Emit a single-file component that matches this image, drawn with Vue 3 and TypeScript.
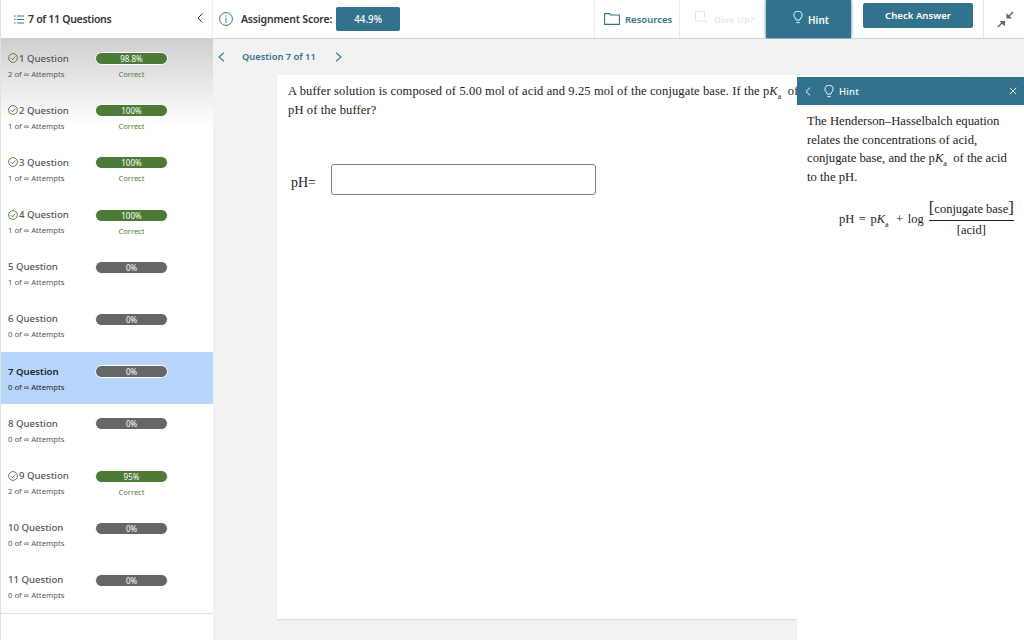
<script setup lang="ts">
interface Row { n: number; pct: string; attempts: number; done: boolean; active?: boolean }
const rows: Row[] = [
  { n: 1, pct: '98.8%', attempts: 2, done: true },
  { n: 2, pct: '100%', attempts: 1, done: true },
  { n: 3, pct: '100%', attempts: 1, done: true },
  { n: 4, pct: '100%', attempts: 1, done: true },
  { n: 5, pct: '0%', attempts: 1, done: false },
  { n: 6, pct: '0%', attempts: 0, done: false },
  { n: 7, pct: '0%', attempts: 0, done: false, active: true },
  { n: 8, pct: '0%', attempts: 0, done: false },
  { n: 9, pct: '95%', attempts: 2, done: true },
  { n: 10, pct: '0%', attempts: 0, done: false },
  { n: 11, pct: '0%', attempts: 0, done: false },
]
</script>

<template>
  <div class="app">
    <header class="top">
      <div class="top-left">
        <svg class="list-ic" width="10" height="9" viewBox="0 0 10 9" fill="none" stroke="#33728c" stroke-width="1">
          <path d="M0 1h1.500M3 1h7M0 4.500h1.500M3 4.500h7M0 8h1.500M3 8h7" />
        </svg>
        <span class="count">7 of 11 Questions</span>
        <svg class="collapse" width="6" height="10" viewBox="0 0 6 10" fill="none" stroke="#333" stroke-width="1">
          <path d="M5.300.6 1 5l4.300 4.400" />
        </svg>
      </div>
      <div class="score">
        <svg width="14" height="14" viewBox="0 0 14 14" fill="none" stroke="#33728c" stroke-width="1">
          <circle cx="7" cy="7" r="6.400" />
          <path d="M7 6v4.800M7 3.300v1.300" />
        </svg>
        <span class="score-label">Assignment Score:</span>
        <span class="score-box">44.9%</span>
      </div>
      <div class="tool resources">
        <svg width="16" height="12" viewBox="0 0 16 12" fill="none" stroke="#33728c" stroke-width="1.100">
          <path d="M.6 11.400V.6h5l1.200 1.400h8.600v9.400z" />
        </svg>
        <span>Resources</span>
      </div>
      <div class="tool giveup">
        <svg width="13" height="13" viewBox="0 0 13 13" fill="none" stroke="#e6e6e6" stroke-width="1">
          <path d="M8 10H.5V.5h9V7M9 9l3 3M12 9l-3 3" />
        </svg>
        <span>Give Up?</span>
      </div>
      <div class="hint-tab">
        <svg width="10" height="13" viewBox="0 0 11 15" fill="none" stroke="#fff" stroke-width="1.100">
          <path d="M3.500 10.500C3.300 8.600.8 7.600.8 5A4.700 4.700 0 0 1 10.200 5c0 2.600-2.500 3.600-2.700 5.500zM3.600 13.400h3.800" />
        </svg>
        <span>Hint</span>
      </div>
      <div class="check-wrap"><span class="check">Check Answer</span></div>
      <div class="compress">
        <svg width="17" height="17" viewBox="0 0 18 18" fill="#666" stroke="#666">
          <path d="M17 1l-5 5" stroke-width="1.500" />
          <path d="M10 2v6h6z" stroke="none" />
          <path d="M1 17l5-5" stroke-width="1.500" />
          <path d="M2.500 10.500H8.500V16.500z" stroke="none" />
        </svg>
      </div>
    </header>

    <div class="body">
      <aside class="side">
        <div class="list">
          <div v-for="r in rows" :key="r.n" class="row" :class="{ active: r.active }">
            <div class="row-left">
              <div class="title">
                <svg v-if="r.done" width="10" height="10" viewBox="0 0 10 10" fill="none" stroke="#4a7c37" stroke-width="0.900">
                  <circle cx="5" cy="5" r="4.400" />
                  <path d="M2.800 5.200 4.400 6.800 7.300 3.500" />
                </svg>
                <span>{{ r.n }} Question</span>
              </div>
              <div class="attempts">{{ r.attempts }} of ∞ Attempts</div>
            </div>
            <div class="row-right">
              <div class="pill" :class="{ ok: r.done }">{{ r.pct }}</div>
              <div v-if="r.done" class="correct">Correct</div>
            </div>
          </div>
        </div>
      </aside>

      <main class="main">
        <nav class="qnav">
          <svg width="7" height="10" viewBox="0 0 7 10" fill="none" stroke="#33728c" stroke-width="1.100"><path d="M6 .6 1 5l5 4.400" /></svg>
          <span class="qlabel">Question 7 of 11</span>
          <svg width="7" height="10" viewBox="0 0 7 10" fill="none" stroke="#33728c" stroke-width="1.100"><path d="M1 .6 6 5 1 9.400" /></svg>
        </nav>
        <section class="card">
          <p class="qtext">A buffer solution is composed of 5.00 mol of acid and 9.25 mol of the conjugate base. If the p<i>K</i><sub>a</sub> of<br>pH of the buffer?</p>
          <div class="answer">
            <span class="ph">pH=</span>
            <input class="field" type="text" aria-label="pH" />
          </div>
        </section>
      </main>
    </div>

    <aside class="hint">
      <div class="hint-head">
        <svg width="6" height="9" viewBox="0 0 6 9" fill="none" stroke="#fff" stroke-width="1"><path d="M5 .6 1 4.500 5 8.400" /></svg>
        <svg class="bulb" width="10" height="13" viewBox="0 0 11 15" fill="none" stroke="#fff" stroke-width="1.100">
          <path d="M3.500 10.500C3.300 8.600.8 7.600.8 5A4.700 4.700 0 0 1 10.200 5c0 2.600-2.500 3.600-2.700 5.500zM3.600 13.400h3.800" />
        </svg>
        <span class="hint-title">Hint</span>
        <svg class="close" width="8" height="8" viewBox="0 0 8 8" fill="none" stroke="#fff" stroke-width="1"><path d="M.8.8l6.400 6.400M7.200.8.800 7.200" /></svg>
      </div>
      <div class="hint-body">
        <p class="hint-text">The Henderson–Hasselbalch equation relates the concentrations of acid, conjugate base, and the p<i>K</i><sub>a</sub> of the acid to the pH.</p>
        <div class="formula">
          <span class="lhs">pH = p<i>K</i><sub>a</sub> + log</span>
          <span class="frac">
            <span class="num"><span class="bk">[</span>conjugate base<span class="bk">]</span></span>
            <span class="den">[acid]</span>
          </span>
        </div>
      </div>
    </aside>
  </div>
</template>

<style>
html, body { margin: 0; padding: 0; background: #fff; }
</style>

<style scoped>
.app {
  position: relative;
  width: 1024px;
  height: 640px;
  overflow: hidden;
  box-sizing: border-box;
  border-left: 1px solid #e2e2e2;
  display: flex;
  flex-direction: column;
  background: #fff;
  font-family: "Noto Sans", sans-serif;
  color: #333;
}
.top {
  height: 39px;
  flex: none;
  box-sizing: border-box;
  border-bottom: 1px solid #d4d4d4;
  display: flex;
  align-items: stretch;
}
.top-left {
  width: 212px;
  box-sizing: border-box;
  padding-left: 13px;
  display: flex;
  align-items: center;
  border-right: 1px solid #f0f0f0;
}
.count { margin-left: 4px; font-size: 10.500px; font-weight: 600; letter-spacing: -0.300px; color: #333; }
.collapse { margin-left: 86px; margin-top: -2px; }
.score {
  width: 382px;
  box-sizing: border-box;
  padding-left: 6px;
  display: flex;
  align-items: center;
  border-right: 1px solid #ececec;
}
.score-label { margin-left: 8px; font-size: 10.500px; font-weight: 600; letter-spacing: -0.200px; }
.score-box {
  margin-left: 4px;
  width: 64px;
  height: 24px;
  border-radius: 2px;
  background: #33728c;
  color: #fff;
  font-size: 9.800px;
  font-weight: 500;
  display: flex;
  align-items: center;
  justify-content: center;
}
.tool { display: flex; align-items: center; font-size: 9.500px; font-weight: 600; box-sizing: border-box; }
.resources { width: 85px; padding-left: 9px; gap: 5px; color: #33728c; border-right: 1px solid #ececec; }
.giveup { width: 86px; padding-left: 15px; gap: 6px; color: #e8e8e8; }
.giveup svg { margin-top: -3px; }
.hint-tab {
  width: 85px;
  box-sizing: border-box;
  padding-left: 27px;
  background: #33728c;
  box-shadow: 0 0 3px #33728c;
  color: #fff;
  font-size: 10px;
  font-weight: 600;
  display: flex;
  align-items: center;
  gap: 5px;
}
.hint-tab svg { margin-top: -4px; }
.hint-tab span { margin-top: 2px; }
.check-wrap { width: 133px; box-sizing: border-box; padding: 3px 0 0 12px; border-right: 1px solid #e4e4e4; }
.check {
  width: 110px;
  height: 25px;
  border-radius: 2px;
  background: #33728c;
  color: #fff;
  font-size: 9.600px;
  font-weight: 600;
  display: flex;
  align-items: center;
  justify-content: center;
}
.compress { flex: 1; padding: 11px 0 0 13px; box-sizing: border-box; }

.body { flex: 1; display: flex; min-height: 0; }
.side { width: 212px; flex: none; }
.list {
  border-bottom: 1px solid #e0e0e0;
  background: linear-gradient(#cfcfcf 0, #fff 86px);
}
.row {
  height: 52.200px;
  box-sizing: border-box;
  padding: 13px 0 0 7px;
  display: flex;
}
.row.active { background: #b5d6fa; }
.row-left { width: 87px; }
.title {
  height: 12px;
  display: flex;
  align-items: center;
  gap: 1px;
  font-size: 9.600px;
  font-weight: 500;
  color: #555;
}
.active .title { color: #222; font-weight: 600; }
.attempts { margin-top: 3.500px; font-size: 7.700px; line-height: 12px; color: #555; }
.active .attempts { color: #222; }
.row-right { width: 73px; text-align: center; }
.pill {
  height: 13px;
  box-sizing: border-box;
  border: 1px solid #fff;
  border-radius: 7px;
  background: #666;
  color: #fff;
  font-size: 8px;
  line-height: 11px;
}
.pill.ok { background: #4a7c37; }
.correct { margin-top: 4px; font-size: 7.500px; line-height: 11px; color: #4a7c37; }

.main {
  flex: 1;
  min-width: 0;
  background: #f2f2f2;
  display: flex;
  flex-direction: column;
}
.qnav {
  height: 36px;
  flex: none;
  box-sizing: border-box;
  padding: 0 0 0 5px;
  display: flex;
  align-items: center;
  color: #33728c;
}
.qlabel { margin: -1px 19px 0 17px; font-size: 9.300px; font-weight: 600; }
.card {
  margin-left: 64px;
  width: 683px;
  height: 544px;
  box-sizing: border-box;
  padding: 7px 0 0 11px;
  background: #fff;
  box-shadow: 0 1px 1px #dcdcdc;
}
.qtext {
  margin: 0;
  font-family: "Liberation Serif", serif;
  font-size: 12.500px;
  line-height: 19px;
  letter-spacing: 0.130px;
  color: #222;
  white-space: nowrap;
}
sub { font-size: 0.65em; line-height: 0; margin-right: 3px; }
.answer { margin-top: 44px; padding-left: 3px; display: flex; align-items: center; }
.ph { width: 40px; padding-top: 7px; font-family: "Liberation Serif", serif; font-size: 14px; color: #222; }
.field {
  width: 265px;
  height: 31px;
  box-sizing: border-box;
  border: 1px solid #808080;
  border-radius: 3px;
  background: #fff;
  outline: none;
}

.hint {
  position: absolute;
  left: 796px;
  top: 77px;
  width: 227px;
  height: 563px;
  background: #fff;
  font-family: "Liberation Serif", serif;
}
.hint-head {
  height: 28px;
  background: #33728c;
  color: #fff;
  display: flex;
  align-items: center;
  padding-left: 8px;
  font-family: "Noto Sans", sans-serif;
}
.bulb { margin-left: 13px; }
.hint-title { margin-left: 5px; font-size: 9.500px; font-weight: 500; letter-spacing: 0.200px; }
.close { margin-left: auto; margin-right: 7px; }
.hint-body { padding: 7px 10px 0 10px; color: #222; }
.hint-text { margin: 0; width: 204px; font-size: 12.700px; line-height: 18.700px; }
.formula {
  margin-top: 14px;
  padding-left: 32px;
  display: flex;
  align-items: center;
  gap: 5px;
  font-size: 12.500px;
  white-space: nowrap;
}
.lhs { word-spacing: 1.400px; }
.frac { display: inline-flex; flex-direction: column; align-items: center; }
.num { border-bottom: 1px solid #222; padding-bottom: 2px; line-height: 17px; }
.bk { font-size: 17px; font-weight: 400; line-height: 0; }
.den { line-height: 18px; }
</style>
